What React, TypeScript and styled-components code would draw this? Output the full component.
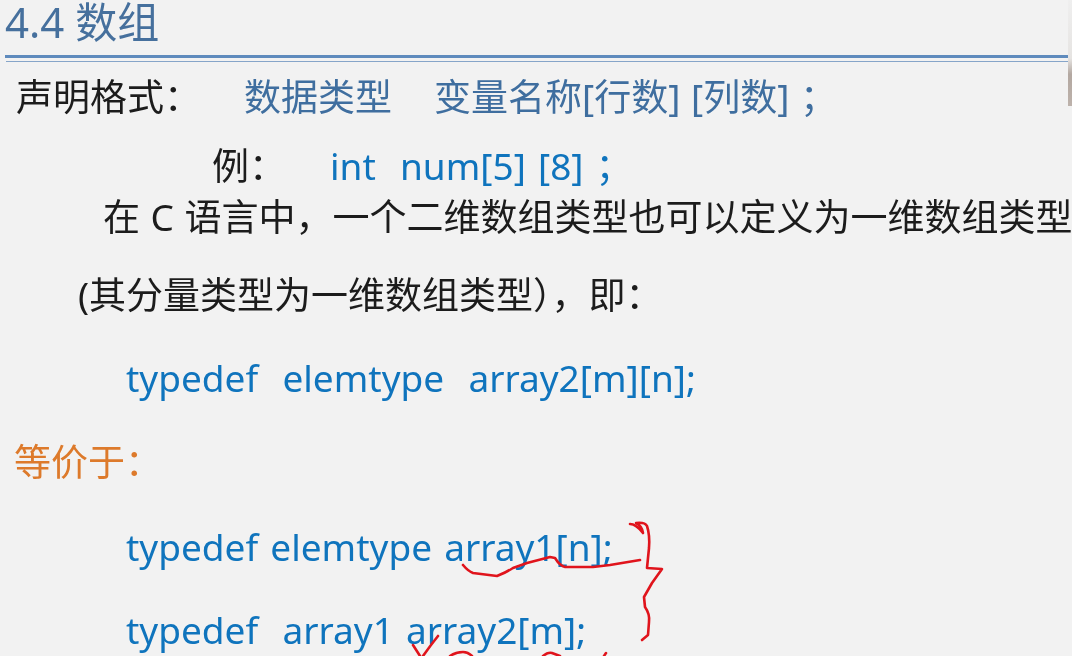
import React from "react";
import styled, { createGlobalStyle } from "styled-components";

const Global = createGlobalStyle`
  html, body { margin: 0; padding: 0; width: 1072px; height: 656px; overflow: hidden; background: #f2f2f2; }
`;

const Slide = styled.main`
  position: relative;
  width: 1072px;
  height: 656px;
  overflow: hidden;
  background: #f2f2f2;
  font-family: "Noto Sans", "Noto Sans CJK SC", sans-serif;
  filter: blur(0.45px);
`;

const Title = styled.h1`
  margin: 0;
  height: 55px;
  padding-left: 5px;
  font-size: 42px;
  line-height: 44px;
  font-weight: 400;
  color: #46709d;
  white-space: nowrap;
`;

const Rule = styled.div`
  width: 1065px;
  margin-left: 5px;
  height: 3px;
  margin-bottom: 3px;
  background: #5f8bbd;
  box-shadow: 0 5px 0 -1px #86a5c9;
`;

const Sliver = styled.div`
  position: absolute;
  top: 0;
  right: 0;
  width: 4px;
  height: 106px;
  background: linear-gradient(#efefef 0%, #e6e4e2 55%, #b3a8a1 70%, #bdb2ab 100%);
`;

const Line = styled.p<{ $indent: number; $gap: number }>`
  margin: ${(p) => p.$gap}px 0 0;
  height: 46px;
  line-height: 46px;
  padding-left: ${(p) => p.$indent}px;
  font-size: 37px;
  word-spacing: 1px;
  white-space: nowrap;
  color: #1c1c1c;
`;

const Label = styled.span<{ $width: number }>`
  display: inline-block;
  width: ${(p) => p.$width}px;
`;

const Slate = styled.span`
  color: #3f6e9f;
`;

const Code = styled.span`
  color: #0f74bd;
  font-size: 37px;
  word-spacing: 2.5px;
`;

const Orange = styled.span`
  color: #dd7a2b;
`;

const Ink = styled.svg`
  position: absolute;
  inset: 0;
  pointer-events: none;
`;

const Stroke = styled.path`
  fill: none;
  stroke: #e0141c;
  stroke-width: 2.6;
  stroke-linecap: round;
  stroke-linejoin: round;
`;

export default function App() {
  return (
    <Slide>
      <Global />
      <Title>4.4 数组</Title>
      <Rule />
      <Line $indent={16} $gap={16}>
        <Label $width={228}>声明格式：</Label>
        <Slate>数据类型</Slate>
        <Label $width={42} />
        <Slate>变量名称[行数] [列数] ；</Slate>
      </Line>
      <Line $indent={212} $gap={23}>
        <Label $width={118}>例：</Label>
        <Code>int&nbsp; num[5] [8] ；</Code>
      </Line>
      <Line $indent={103} $gap={5}>
        在 C 语言中，一个二维数组类型也可以定义为一维数组类型
      </Line>
      <Line $indent={78} $gap={32}>
        (其分量类型为一维数组类型），即：
      </Line>
      <Line $indent={126} $gap={37}>
        <Code>typedef&nbsp; elemtype&nbsp; array2[m][n];</Code>
      </Line>
      <Line $indent={14} $gap={38}>
        <Orange>等价于：</Orange>
      </Line>
      <Line $indent={126} $gap={39}>
        <Code>typedef elemtype array1[n];</Code>
      </Line>
      <Line $indent={126} $gap={37}>
        <Code>typedef&nbsp; array1 array2[m];</Code>
      </Line>
      <Sliver />
      <Ink width="1072" height="656" viewBox="0 0 1072 656">
        <Stroke d="M463 565 Q468 571 473 573 L497 576 Q505 573 513 568 L527 563 L550 557 L555 558 Q560 566 565 567 L593 567 L610 565 L640 560" />
        <Stroke d="M630 524 Q636 524 643 533 Q642 526 636 523 Q645 522 647 526 Q650 535 649 548 L647 568 L662 569 L652 583 L644 597 L645 607 Q650 614 649 622 L648 635 L642 640" />
        <Stroke d="M413 645 L420 656 M438 636 Q430 646 423 656" />
        <Stroke d="M450 656 Q456 652 463 652 Q468 652 472 656 M543 656 Q548 652 552 653 L560 656 M606 653 L604 656" />
      </Ink>
    </Slide>
  );
}
